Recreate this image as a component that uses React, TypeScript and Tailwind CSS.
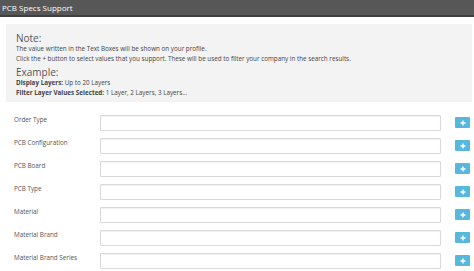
const fields = [
  "Order Type",
  "PCB Configuration",
  "PCB Board",
  "PCB Type",
  "Material",
  "Material Brand",
  "Material Brand Series",
];

const PlusButton = () => (
  <button className="flex h-[11px] w-[15px] items-center justify-center rounded-[1px] bg-[#56b8dc]">
    <svg width="6" height="6" viewBox="0 0 6 6">
      <path d="M3 0.5v5M0.5 3h5" stroke="white" strokeWidth="1.4" />
    </svg>
  </button>
);

export default function App() {
  return (
    <div className="h-[271px] w-[474px] overflow-hidden bg-white font-['Open_Sans',sans-serif] text-[#555]">
      <div className="flex h-[17px] items-center border-b-2 border-[#3f3f3f] bg-[#575757] pl-[2px] text-[8px] text-white">
        PCB Specs Support
      </div>
      <div className="pt-[7px]">
        <div className="ml-[6px] mr-[2px] h-[78px] bg-[#f3f3f3] pl-[10px] pt-[8px] text-[6.3px] leading-[10px] text-[#444]">
          <div className="text-[10px] leading-[12px] text-[#555]">Note:</div>
          <div>The value written in the Text Boxes will be shown on your profile.</div>
          <div>
            Click the + button to select values that you support. These will be used to filter your company in the search results.
          </div>
          <div className="mt-[2px] text-[10px] leading-[12px] text-[#555]">Example:</div>
          <div>
            <span className="font-bold">Display Layers:</span> Up to 20 Layers
          </div>
          <div>
            <span className="font-bold">Filter Layer Values Selected:</span> 1 Layer, 2 Layers, 3 Layers...
          </div>
        </div>
      </div>
      <div className="flex flex-col gap-[7px] pt-[13px]">
        {fields.map((f) => (
          <div key={f} className="flex h-[16px] items-start">
            <div className="w-[100px] pl-[14px] pt-[1px] text-[6.3px] leading-[8px] text-[#555]">{f}</div>
            <input className="h-[16px] w-[341px] rounded-[1px] border border-[#d9d9d9] bg-white shadow-[inset_0_1px_1px_rgba(0,0,0,0.06)] outline-none" />
            <div className="ml-[14px] pt-[2px]">
              <PlusButton />
            </div>
          </div>
        ))}
      </div>
    </div>
  );
}
